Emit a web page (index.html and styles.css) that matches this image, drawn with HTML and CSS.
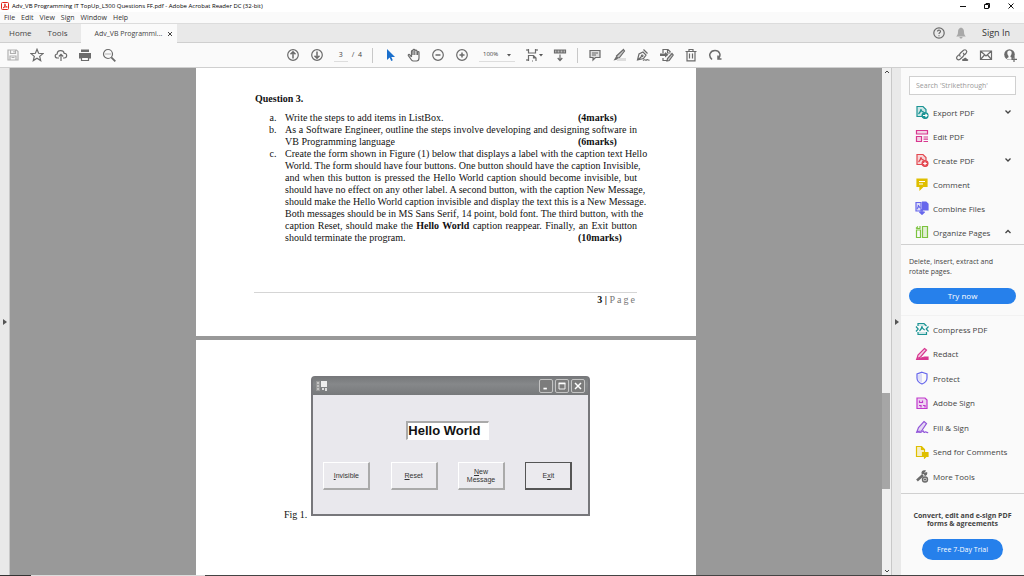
FILE: index.html
```html
<!DOCTYPE html>
<html lang="en">
<head>
    <meta charset="UTF-8">
    <meta name="viewport" content="width=device-width, initial-scale=1.0">
    <title>Adv_VB Programming IT TopUp_L300 Questions FF.pdf</title>
    <link rel="stylesheet" href="styles.css">
</head>
<body>
    <header class="title-bar">
        <svg class="app-icon" viewBox="0 0 8 8"><rect x=".5" y=".5" width="7" height="7" rx="1" fill="#fff" stroke="#e2231a"/><path d="M2 6.2C3.6 5 4.2 3 3.9 1.8C4 4 5 5 6.3 5C4.600 4.600 3 5 2 6.200Z" fill="none" stroke="#e2231a" stroke-width=".9"/></svg>
        <span class="window-title">Adv_VB Programming IT TopUp_L300 Questions FF.pdf - Adobe Acrobat Reader DC (32-bit)</span>
        <div class="window-buttons">
            <button aria-label="Minimize"><svg viewBox="0 0 8 8"><path d="M1 4.500h6" stroke="#111"/></svg></button>
            <button aria-label="Restore"><svg viewBox="0 0 8 8"><path d="M1.500 2.500h4v4h-4zM3 2.500v-1h3.500V5.500h-1" fill="none" stroke="#111"/></svg></button>
            <button aria-label="Close"><svg viewBox="0 0 8 8"><path d="M1.500 1.500l5 5M6.500 1.500l-5 5" stroke="#111"/></svg></button>
        </div>
    </header>

    <nav class="menu-bar">
        <button>File</button>
        <button>Edit</button>
        <button>View</button>
        <button>Sign</button>
        <button>Window</button>
        <button>Help</button>
    </nav>

    <div class="tab-bar">
        <button class="tab">Home</button>
        <button class="tab">Tools</button>
        <div class="tab active">
            <span>Adv_VB Programmi...</span>
            <button class="tab-close" aria-label="Close tab"><svg viewBox="0 0 6 6"><path d="M1 1l4 4M5 1L1 5" stroke="#444"/></svg></button>
        </div>
        <div class="account">
            <button aria-label="Help"><svg class="icon" viewBox="0 0 14 14"><circle cx="7" cy="7" r="5.200"/><path d="M5.500 5.600c0-2 3-2 3-.200C8.500 6.500 7 6.500 7 8M7 9.200v1"/></svg></button>
            <button aria-label="Notifications"><svg class="icon" viewBox="0 0 14 14"><path class="bell" d="M7 1.500c-2.400.600-3 2.400-3 4.500 0 2-.500 3-1.800 4.500h9.600C10.500 9 10 8 10 6c0-2.100-.600-3.900-3-4.500zM5.500 11h3c0 2-3 2-3 0z"/></svg></button>
            <a href="#" class="sign-in">Sign In</a>
        </div>
    </div>

    <div class="toolbar">
        <div class="tools file-tools">
            <button aria-label="Save"><svg class="icon pale" viewBox="0 0 14 14"><path d="M2 2h8.500l1.500 1.500V12H2zM4.500 2v3.500h5V2M4 12V8h6v4M8 3v1.500M5.500 9.500h3"/></svg></button>
            <button aria-label="Favourite"><svg class="icon" viewBox="0 0 14 14"><path d="M7 1.300l1.600 4 4.400.300-3.300 2.800 1 4.200L7 10.300l-3.700 2.300 1-4.200L1 5.600l4.400-.300z"/></svg></button>
            <button aria-label="Upload"><svg class="icon" viewBox="0 0 14 14"><path d="M5 10H3.500C.500 10 .500 6 3.200 6c0-4.500 6.300-4.500 7 -.700 3.300-.300 3.300 4.700 0 4.700H9M7 13V6.500M4.800 8.500L7 6.300l2.200 2.200"/></svg></button>
            <button aria-label="Print"><svg class="icon" viewBox="0 0 14 14"><path class="solid" d="M1 5h12v5.500h-2V9H3v1.500H1zM3 1.500h8V4H3z"/><path d="M3.500 9.500h7v3h-7z"/></svg></button>
            <button aria-label="Find"><svg class="icon" viewBox="0 0 14 14"><circle cx="6" cy="6" r="4.500"/><path d="M9.300 9.300l4 4" stroke-width="1.800"/><path d="M3.500 6h1M5.500 6h1M7.500 6h1"/></svg></button>
        </div>

        <div class="tools page-tools">
            <button aria-label="Previous page"><svg class="icon" viewBox="0 0 14 14"><circle cx="7" cy="7" r="5.300"/><path d="M7 10.500V4M4.500 6.300L7 3.800l2.500 2.500" stroke-width="1.500"/></svg></button>
            <button aria-label="Next page"><svg class="icon" viewBox="0 0 14 14"><circle cx="7" cy="7" r="5.300"/><path d="M7 3.500V10M4.500 7.700L7 10.200l2.500-2.500" stroke-width="1.500"/></svg></button>
            <label class="page-number"><input type="text" value="3" aria-label="Page number"><span>/&nbsp; 4</span></label>
            <span class="separator"></span>
            <button aria-label="Select"><svg class="icon" viewBox="0 0 14 14"><path d="M4 1v11l2.700-2.500 1.500 3.500 1.600-.700-1.500-3.400H12z" fill="#1a6fcc" stroke="none"/></svg></button>
            <button aria-label="Pan"><svg class="icon" viewBox="0 0 14 14"><path d="M4.500 9L2.800 6.800c-.800-.900-2 0-1.400.900L4.500 12c.500.800 1 1 2 1h3c1.500 0 2.500-1.500 2.500-3V4.300c0-1-1.500-1-1.500 0V7M4.500 9V3.300c0-1 1.500-1 1.500 0V7M6 7V2c0-1 1.800-1 1.800 0v5M8 3c0-1.200 2-1 2 .200V7"/></svg></button>
            <button aria-label="Zoom out"><svg class="icon" viewBox="0 0 14 14"><circle cx="7" cy="7" r="5.300"/><path d="M4.500 7h5" stroke-width="1.500"/></svg></button>
            <button aria-label="Zoom in"><svg class="icon" viewBox="0 0 14 14"><circle cx="7" cy="7" r="5.300"/><path d="M4.500 7h5M7 4.500v5" stroke-width="1.500"/></svg></button>
            <label class="zoom-level"><select aria-label="Zoom"><option>100%</option></select><svg class="caret" viewBox="0 0 4 4"><path d="M0 1h4L2 3.500z"/></svg></label>
            <button class="with-caret" aria-label="Page fit"><svg class="icon" viewBox="0 0 14 14"><path d="M3.500 1v4h7V1M2 1v2M12 1v2M3.500 13V7.500h5l2.500 2.500v3M8.500 7.500V10H11M2 11v2M7 13h1"/></svg><svg class="caret" viewBox="0 0 4 4"><path d="M0 1h4L2 3.500z"/></svg></button>
            <button aria-label="Page display"><svg class="icon" viewBox="0 0 14 14"><path d="M1.500 2h11v3h-11z" fill="#bbb"/><path d="M4 2v3M7 2v3M10 2v3M7 6.500v6M4.700 10L7 12.500 9.300 10"/></svg></button>
            <span class="separator"></span>
            <button aria-label="Comment"><svg class="icon" viewBox="0 0 14 14"><path d="M2 2.500h10v7H7.500L5 12V9.500H2z" fill="#ddd"/><path d="M4 5h6M4 7h4"/></svg></button>
            <button aria-label="Highlight"><svg class="icon" viewBox="0 0 14 14"><path d="M5 10h9v3H5z" fill="#ddd" stroke="none"/><path d="M11.500 1.500l1 1.500-5 6.500-2.300.300-.700-1.800z" fill="#ccc"/><path class="solid" d="M4 8.500l2 1.800-1.500 1.500-3 .700z"/></svg></button>
            <button aria-label="Draw signature"><svg class="icon" viewBox="0 0 14 14"><path d="M1.500 12l1.500-6 4-2 3 3-2.500 3.500zM2 12l3.500-3.500M7.500 1.500l4 4M7 12.500c2-2 2.500.500 3.500-.500s1 .500 3 .200"/><circle cx="6.200" cy="7.800" r=".8"/></svg></button>
            <button aria-label="Fill form"><svg class="icon" viewBox="0 0 14 14"><path d="M3 5V1.500h5l2.500 2.500M7.500 2v3h3M3 10v2.500h4"/><path class="solid" d="M0 5.500h5V4l3.500 2.700L5 9.500V8H0z"/><path d="M12 5.500L7.500 10.500 7 13l2.200-.500 4-5.500z" fill="#ccc"/></svg></button>
            <button aria-label="Delete"><svg class="icon" viewBox="0 0 14 14"><path d="M1.500 3.500h11M5 3.500v-2h4v2M3 3.500v9.300h8V3.500M5.500 5.500v5M8.500 5.500v5"/></svg></button>
            <button aria-label="Rotate"><svg class="icon" viewBox="0 0 14 14"><path d="M4 11.500C-.500 7.500 2.500 2.500 7 2.500s6.500 4.500 3.500 8M10 7.500v3.500h3.500" stroke-width="1.500"/></svg></button>
        </div>

        <div class="tools share-tools">
            <button aria-label="Share link"><svg class="icon" viewBox="0 0 14 14"><path d="M5.500 8.500c-1.500-1-1-2.500 0-3.500l3-2.700c2-1.500 4.200.700 2.800 2.500L9.500 7M8 5c1.500 1 1 2.500 0 3.500l-3 2.800c-2 1.500-4.500-.800-3-2.700l2-2"/><path class="solid" d="M7.500 13c-1-1 0-2.500 1.200-2.200.800-1.800 3-1.300 3.200.300 1.800 0 1.800 1.900.500 1.900z"/></svg></button>
            <button aria-label="Email"><svg class="icon" viewBox="0 0 14 14"><path d="M1.500 3h11v8.500h-11zM1.500 3L7 8l5.500-5M1.500 11.500L5.500 7M12.500 11.500L8.500 7"/></svg></button>
            <button aria-label="Share with others"><svg class="icon" viewBox="0 0 14 14"><circle cx="6.500" cy="6.500" r="5.300" class="solid"/><path d="M6.500 2.500c-3 0-2.500 4-1 5.500v1.200L3.500 10.500c2 1.500 4 1.200 5 .500V9.500L7.500 9V8C9 6.500 9.500 2.500 6.500 2.500z" fill="#fafafa" stroke="none"/><path d="M11 8.500v5.500M8.500 11.300h5.500"/></svg></button>
        </div>
    </div>

    <main class="workspace">
        <button class="rail left-rail" aria-label="Show navigation pane"><svg class="rail-arrow" viewBox="0 0 4 6"><path d="M0 0l4 3-4 3z"/></svg></button>

        <div class="canvas">
            <section class="page page-three">
                <h1>Question 3.</h1>
                <ol class="questions">
                    <li>
                        <div class="line marked"><span>Write the steps to add items in ListBox.</span><b>(4marks)</b></div>
                    </li>
                    <li>
                        <div class="line">As a Software Engineer, outline the steps involve developing and designing software in</div>
                        <div class="line marked"><span>VB Programming language</span><b>(6marks)</b></div>
                    </li>
                    <li>
                        <div class="line">Create the form shown in Figure (1) below that displays a label with the caption text Hello</div>
                        <div class="line">World. The form should have four buttons. One button should have the caption Invisible,</div>
                        <div class="line">and when this button is pressed the Hello World caption should become invisible, but</div>
                        <div class="line">should have no effect on any other label. A second button, with the caption New Message,</div>
                        <div class="line">should make the Hello World caption invisible and display the text this is a New Message.</div>
                        <div class="line">Both messages should be in MS Sans Serif, 14 point, bold font. The third button, with the</div>
                        <div class="line">caption Reset, should make the <b>Hello World</b> caption reappear. Finally, an Exit button</div>
                        <div class="line marked"><span>should terminate the program.</span><b>(10marks)</b></div>
                    </li>
                </ol>
                <footer class="page-footer"><b>3 |</b> <span>Page</span></footer>
            </section>

            <section class="page page-four">
                <figure class="figure">
                    <figcaption>Fig 1.</figcaption>
                    <div class="dialog">
                        <div class="dialog-bar">
                            <svg class="dialog-icon" viewBox="0 0 12 10"><path d="M0 0h4v10H0z" fill="#999"/><path d="M1 2h2M1 5h2M1 8h2" stroke="#eee"/><path d="M5 0h6v6H5z" fill="#eee"/><path d="M6 7h2v2H6zM9 7h2v3H9z" fill="#ddd"/></svg>
                            <button aria-label="Minimize form"><svg viewBox="0 0 14 14"><path d="M4 10h4" stroke="#fff" stroke-width="2"/></svg></button>
                            <button aria-label="Maximize form"><svg viewBox="0 0 14 14"><path d="M3.500 4h7v6.500h-7z" fill="none" stroke="#fff"/><path d="M3 4h8" stroke="#fff" stroke-width="2"/></svg></button>
                            <button aria-label="Close form"><svg viewBox="0 0 14 14"><path d="M3.500 3.500l7 7M10.500 3.500l-7 7" stroke="#fff" stroke-width="1.700"/></svg></button>
                        </div>
                        <div class="dialog-body">
                            <div class="hello">Hello World</div>
                            <div class="dialog-buttons">
                                <button><u>I</u>nvisible</button>
                                <button><u>R</u>eset</button>
                                <button><u>N</u>ew<br>Message</button>
                                <button class="default">E<u>x</u>it</button>
                            </div>
                        </div>
                    </div>
                </figure>
            </section>
        </div>

        <div class="scrollbar">
            <svg viewBox="0 0 6 6"><path d="M1 4l2-2 2 2"/></svg>
            <div class="track"><div class="thumb"></div></div>
            <svg viewBox="0 0 6 6"><path d="M1 2l2 2 2-2"/></svg>
        </div>

        <button class="rail right-rail" aria-label="Hide tools pane"><svg class="rail-arrow" viewBox="0 0 4 6"><path d="M0 0l4 3-4 3z"/></svg></button>

        <aside class="tools-pane">
            <div class="search"><input type="text" placeholder="Search 'Strikethrough'" aria-label="Search tools"></div>
            <ul class="tool-list">
                <li><button><svg class="tool-icon teal" viewBox="0 0 14 14"><path d="M7 11.500H2v-10h6l3 3V7" class="tint"/><path d="M3.500 9C5.500 7 6 5.500 5.800 4c.200 2 1.500 3 3 3.200"/><circle cx="10" cy="10.500" r="3" class="fill"/><path d="M8 10.500h4M10.500 9l1.500 1.500-1.500 1.500" class="white"/></svg>Export PDF<svg class="chevron" viewBox="0 0 8 8"><path d="M1.500 2.500L4 5l2.500-2.500"/></svg></button></li>
                <li><button><svg class="tool-icon pink" viewBox="0 0 14 14"><path d="M1.500 1.500h11v3.500h-11zM1.500 7.500h5v5h-5z" class="tint"/><path d="M8.500 8H13M8.500 10.200H13M8.500 12.500H13"/></svg>Edit PDF</button></li>
                <li><button><svg class="tool-icon red" viewBox="0 0 14 14"><path d="M7 11.500H2v-10h6l3 3V7" class="tint"/><path d="M3.500 9C5.500 7 6 5.500 5.800 4c.200 2 1.500 3 3 3.200"/><circle cx="10" cy="10.500" r="3" class="fill"/><path d="M8.200 10.500h3.600M10 8.700v3.600" class="white"/></svg>Create PDF<svg class="chevron" viewBox="0 0 8 8"><path d="M1.500 2.500L4 5l2.500-2.500"/></svg></button></li>
                <li><button><svg class="tool-icon gold" viewBox="0 0 14 14"><path d="M2 2h10v7.500H8L5 12.500v-3H2z" class="fill"/><path d="M4 4.500h6M4 7h4" class="white"/></svg>Comment</button></li>
                <li><button><svg class="tool-icon blue" viewBox="0 0 14 14"><path d="M1 1.500h5v8.500h-5z" class="tint"/><path d="M2 8C3.500 6.500 3.500 5 3.500 4c.300 2 1 2.500 2 3"/><path d="M7.500 1h3.500l2 2v6H7.500z" class="fill"/><path d="M7 8v5M4.500 10.700L7 13l2.500-2.300" stroke-width="1.700"/></svg>Combine Files</button></li>
                <li><button><svg class="tool-icon green" viewBox="0 0 14 14"><path d="M7.500 1.500h5v11h-5z" class="tint"/><path d="M1.500 5v7.500h4V5zM1 3.500L3 1.500M1.500 3.500h4M5 1v2.500"/></svg>Organize Pages<svg class="chevron" viewBox="0 0 8 8"><path d="M1.500 5L4 2.500 6.500 5"/></svg></button></li>
            </ul>
            <div class="promo">
                <p>Delete, insert, extract and<br>rotate pages.</p>
                <button class="pill">Try now</button>
            </div>
            <ul class="tool-list more">
                <li><button><svg class="tool-icon teal" viewBox="0 0 14 14"><path d="M3 4V1.500h6l2.500 2.500M11.500 10v2.500H3V10" class="tint"/><path d="M4.500 9C6.500 7 7 5.500 6.800 4c.200 2 1.500 3.500 3 4M1 4.500L3.200 7 1 9.500M13.500 4.500L11.200 7l2.300 2.500" /></svg>Compress PDF</button></li>
                <li><button><svg class="tool-icon pink" viewBox="0 0 14 14"><path d="M9.500 1.500l2 1.500-6 7-3.500 1.500 1-3.500z" class="tint"/><path d="M1 12.500L9.500 10h3.500v2.500z" class="fill"/></svg>Redact</button></li>
                <li><button><svg class="tool-icon blue" viewBox="0 0 14 14"><path d="M7 1.200L12 3v4c0 3-2 4.800-5 6-3-1.200-5-3-5-6V3z"/><path d="M7 2.500v9C4.500 10.500 3 9 3 7V4z" class="tint" stroke="none"/></svg>Protect</button></li>
                <li><button><svg class="tool-icon magenta" viewBox="0 0 14 14"><path d="M2 2h8l2 2v8.500H2z" class="tint"/><path d="M4.500 4.500v2h3v-2M4 9.500h2v2M8 9.500h2v2"/></svg>Adobe Sign</button></li>
                <li><button><svg class="tool-icon purple" viewBox="0 0 14 14"><path d="M9 1.500l2.500 2-5 7.500-4.500.500 1.500-4z" class="tint"/><path d="M1 12.500c2-1 4 .500 5.500-.500s1.500-2 2-.500 1 1 1.700.400 1 1 3 .600"/></svg>Fill &amp; Sign</button></li>
                <li><button><svg class="tool-icon gold" viewBox="0 0 14 14"><path d="M7 11.500H1.500v-10h5l3 3V7" class="tint"/><path d="M6.500 1.500v3h3M7.500 7.500h5.500v4h-2l-1.500 1.500v-1.500h-2z" class="fill"/></svg>Send for Comments</button></li>
                <li><button><svg class="tool-icon grey" viewBox="0 0 14 14"><path d="M2 11.500L8 6" stroke-width="2.500"/><path d="M11.500 3.500L9.500 5 8.300 4l1.500-2C8 1.500 6.500 3.500 7.500 5.200M11.500 3.500c.300 1.500-.500 2.500-2 3" stroke-width="1.500"/><circle cx="10" cy="10.500" r="2.500" fill="#fafafa" stroke-width="1.400"/><path d="M8.700 10.500h2.600M10 9.200v2.600"/></svg>More Tools</button></li>
            </ul>
            <div class="trial">
                <p>Convert, edit and e-sign PDF<br>forms &amp; agreements</p>
                <button class="pill">Free 7-Day Trial</button>
            </div>
        </aside>
    </main>
    <div class="taskbar-edge"></div>
</body>
</html>
```
FILE: styles.css
```css
* {
    box-sizing: border-box;
}
body {
    margin: 0;
    height: 100vh;
    display: flex;
    flex-direction: column;
    overflow: hidden;
    font-family: "Open Sans", "Noto Sans", sans-serif;
    font-size: 8px;
    color: #444;
    background: #fff;
}
button {
    margin: 0;
    padding: 0;
    border: none;
    background: none;
    font: inherit;
    color: inherit;
}
input, select {
    margin: 0;
    padding: 0;
    border: none;
    background: none;
    font: inherit;
    color: inherit;
    appearance: none;
}
svg {
    display: block;
}
h1, p, ul, ol, figure {
    margin: 0;
    padding: 0;
}

/* window title and menus */
.title-bar {
    flex: 0 0 12px;
    display: flex;
    align-items: center;
    padding: 0 9px 0 1px;
    color: #000;
    font-size: 6px;
    line-height: 12px;
}
.app-icon {
    width: 8px;
    height: 8px;
    margin-right: 3px;
}
.window-buttons {
    display: flex;
    gap: 16px;
    margin-left: auto;
}
.window-buttons svg {
    width: 8px;
    height: 8px;
}
.menu-bar {
    flex: 0 0 11px;
    display: flex;
    gap: 6px;
    padding-left: 4px;
    background: #fafafa;
    font-size: 7px;
    line-height: 11px;
    color: #333;
}
.tab-bar {
    flex: 0 0 20px;
    display: flex;
    border-top: 1px solid #dcdcdc;
    border-bottom: 1px solid #cfcfcf;
    background: #e9e9e9;
    line-height: 18px;
}
.tab {
    padding-left: 9px;
    margin-right: 7px;
}
.tab.active {
    display: flex;
    align-items: center;
    gap: 5px;
    margin: 0 0 -1px 7px;
    padding: 0 4px 0 13px;
    background: #fafafa;
    font-size: 7px;
}
.tab-close svg {
    width: 6px;
    height: 6px;
}
.account {
    display: flex;
    align-items: center;
    gap: 8px;
    margin-left: auto;
    padding-right: 14px;
}
.sign-in {
    margin-left: 6px;
    color: #333;
    font-size: 9px;
    text-decoration: none;
}

/* toolbar */
.icon {
    width: 14px;
    height: 14px;
    fill: none;
    stroke: #6b6b6b;
    stroke-width: 1.2;
}
.icon.pale {
    stroke: #b0b0b0;
}
.icon .solid {
    fill: #6b6b6b;
    stroke: none;
}
.icon .bell {
    fill: #a8a8a8;
    stroke: none;
}
.toolbar {
    flex: 0 0 25px;
    display: flex;
    align-items: center;
    padding-right: 7px;
    border-bottom: 1px solid #cfcfcf;
    background: #fafafa;
}
.tools {
    display: flex;
    align-items: center;
    gap: 10px;
}
.file-tools {
    flex: 0 0 28%;
    padding-left: 6px;
}
.page-tools {
    padding-left: 1px;
}
.share-tools {
    margin-left: auto;
}
.page-number {
    display: flex;
    gap: 4px;
    font-size: 7px;
    line-height: 13px;
}
.page-number input {
    width: 14px;
    border-bottom: 1px solid #ddd;
    text-align: center;
}
.separator {
    width: 1px;
    height: 15px;
    background: #c8c8c8;
}
.zoom-level {
    display: flex;
    align-items: center;
    width: 36px;
    padding: 0 4px;
    border-bottom: 1px solid #ddd;
    font-size: 6px;
    line-height: 13px;
}
.zoom-level select {
    flex: 1;
    width: 20px;
    height: 13px;
}
.caret {
    width: 4px;
    height: 4px;
    fill: #555;
}
.with-caret {
    display: flex;
    align-items: center;
}

/* workspace */
.workspace {
    flex: 1;
    min-height: 0;
    display: flex;
}
.rail {
    flex: 0 0 10px;
    display: flex;
    align-items: center;
    justify-content: center;
    background: #e9e9e9;
}
.left-rail {
    border-right: 1px solid #c8c8c8;
}
.right-rail {
    border-left: 1px solid #c8c8c8;
}
.rail-arrow {
    width: 4px;
    height: 6px;
    fill: #555;
}
.canvas {
    flex: 1;
    display: flex;
    flex-direction: column;
    align-items: center;
    gap: 4px;
    background: #999;
}
.page {
    width: 500px;
    padding: 0 59px 0 58px;
    background: #fff;
    color: #111;
    font-family: "Liberation Serif", serif;
    font-size: 10px;
    line-height: 12px;
}
.page-three {
    padding-top: 25px;
    padding-bottom: 29px;
}
.page-three h1 {
    margin: 0 0 7px 1px;
    font-size: 10px;
    line-height: 12px;
}
.questions {
    padding-left: 25px;
    list-style: lower-alpha outside;
}
.questions li {
    padding-left: 6px;
}
.line {
    white-space: nowrap;
    text-align: justify;
    text-align-last: justify;
}
.line.marked {
    display: flex;
    justify-content: space-between;
    text-align-last: left;
}
.line.marked b {
    width: 59px;
}
.page-footer {
    margin-top: 48px;
    border-top: 1px solid #d5d5d5;
    text-align: right;
    line-height: 14px;
}
.page-footer span {
    color: #777;
    letter-spacing: 2px;
}
.page-four {
    flex: 1;
    padding-top: 36px;
}

/* figure with the sample form */
.figure {
    display: flex;
    align-items: flex-end;
    gap: 4px;
    padding-left: 30px;
}
.figure figcaption {
    flex: 0 0 22px;
    line-height: 2px;
    white-space: nowrap;
}
.dialog {
    width: 279px;
    border: 2px solid #77777b;
    border-top-width: 1px;
    border-radius: 4px 4px 0 0;
    background: #e9e8ed;
    font-family: "Liberation Sans", sans-serif;
}
.dialog-bar {
    display: flex;
    align-items: center;
    gap: 2px;
    height: 18px;
    padding: 0 3px;
    background: linear-gradient(#77797b, #86888a 40%, #77797b);
}
.dialog-icon {
    width: 12px;
    height: 10px;
    margin-right: auto;
}
.dialog-bar button {
    border: 1px solid #c4c4c4;
    border-radius: 2px;
    background: #7c7c7c;
}
.dialog-bar button svg {
    width: 12px;
    height: 12px;
}
.dialog-body {
    padding: 26px 16px 24px 10px;
}
.hello {
    width: 83px;
    margin-left: 83px;
    border: 1px solid #fff;
    border-top: 2px solid #aaa;
    border-left: 2px solid #aaa;
    background: #fff;
    font-size: 13px;
    font-weight: bold;
    line-height: 16px;
    white-space: nowrap;
}
.dialog-buttons {
    display: grid;
    grid-template-columns: repeat(4, 47px);
    justify-content: space-between;
    margin-top: 22px;
}
.dialog-buttons button {
    height: 28px;
    border: 1px solid #fff;
    border-right: 2px solid #aaa;
    border-bottom: 2px solid #aaa;
    background: #ebeaee;
    color: #333;
    font-size: 7px;
    line-height: 8px;
}
.dialog-buttons .default {
    border: 1px solid #555;
    border-right-width: 2px;
    border-bottom-width: 2px;
}

/* scrollbar */
.scrollbar {
    flex: 0 0 9px;
    display: flex;
    flex-direction: column;
    align-items: center;
    padding: 1px 0;
    background: #f0f0f0;
}
.scrollbar svg {
    width: 6px;
    height: 6px;
    fill: none;
    stroke: #444;
}
.track {
    flex: 1;
    align-self: stretch;
    display: grid;
    grid-template-rows: 129fr 39fr 32fr;
}
.thumb {
    grid-row: 2;
    margin-right: 1px;
    background: #a6a6a6;
}

/* tools pane */
.tools-pane {
    flex: 0 0 123px;
    display: flex;
    flex-direction: column;
    background: #fafafa;
}
.search {
    padding: 8px 8px 5px;
}
.search input {
    display: block;
    width: 100%;
    height: 19px;
    padding-left: 6px;
    border: 1px solid #d0d0d0;
    background: #fff;
    font-size: 7px;
}
.search input::placeholder {
    color: #999;
}
.tool-list {
    list-style: none;
}
.tool-list button {
    display: flex;
    align-items: center;
    gap: 4px;
    width: 100%;
    height: 24px;
    padding: 0 12px 0 14px;
    text-align: left;
    white-space: nowrap;
}
.tool-list.more {
    flex: 1;
    display: flex;
    flex-direction: column;
    justify-content: space-between;
    padding: 1px 0 5px;
}
.tool-icon {
    width: 14px;
    height: 14px;
    fill: none;
    stroke: currentColor;
    stroke-width: 1.2;
}
.tool-icon .tint {
    fill: currentColor;
    fill-opacity: .2;
}
.tool-icon .fill {
    fill: currentColor;
}
.tool-icon .white {
    stroke: #fff;
}
.teal {
    color: #1c9494;
}
.pink {
    color: #d83790;
}
.red {
    color: #e34850;
}
.gold {
    color: #dfbf00;
}
.blue {
    color: #6767ec;
}
.green {
    color: #7cc33f;
}
.magenta {
    color: #c038cc;
}
.purple {
    color: #9256d9;
}
.grey {
    color: #6b6b6b;
}
.chevron {
    width: 8px;
    height: 8px;
    margin-left: auto;
    fill: none;
    stroke: #444;
    stroke-width: 1.3;
}
.promo {
    padding: 12px 8px 11px;
    border-top: 1px solid #d0d0d0;
    border-bottom: 1px solid #f2f2f2;
    font-size: 7px;
    line-height: 10px;
}
.pill {
    display: block;
    width: 100%;
    height: 16px;
    border-radius: 11px;
    background: #2680eb;
    color: #fff;
    font-size: 8px;
}
.promo .pill {
    margin-top: 11px;
}
.trial {
    padding: 18px 8px 15px;
    border-top: 1px solid #d0d0d0;
    font-size: 7px;
    line-height: 8px;
    text-align: center;
}
.trial p {
    font-weight: bold;
}
.trial .pill {
    width: 81px;
    height: 21px;
    margin: 11px auto 0;
    font-size: 7px;
}
.taskbar-edge {
    flex: 0 0 1px;
    background: linear-gradient(to right, #333 3%, #ddd 3%, #ddd 20%, #444 20%);
}
```
